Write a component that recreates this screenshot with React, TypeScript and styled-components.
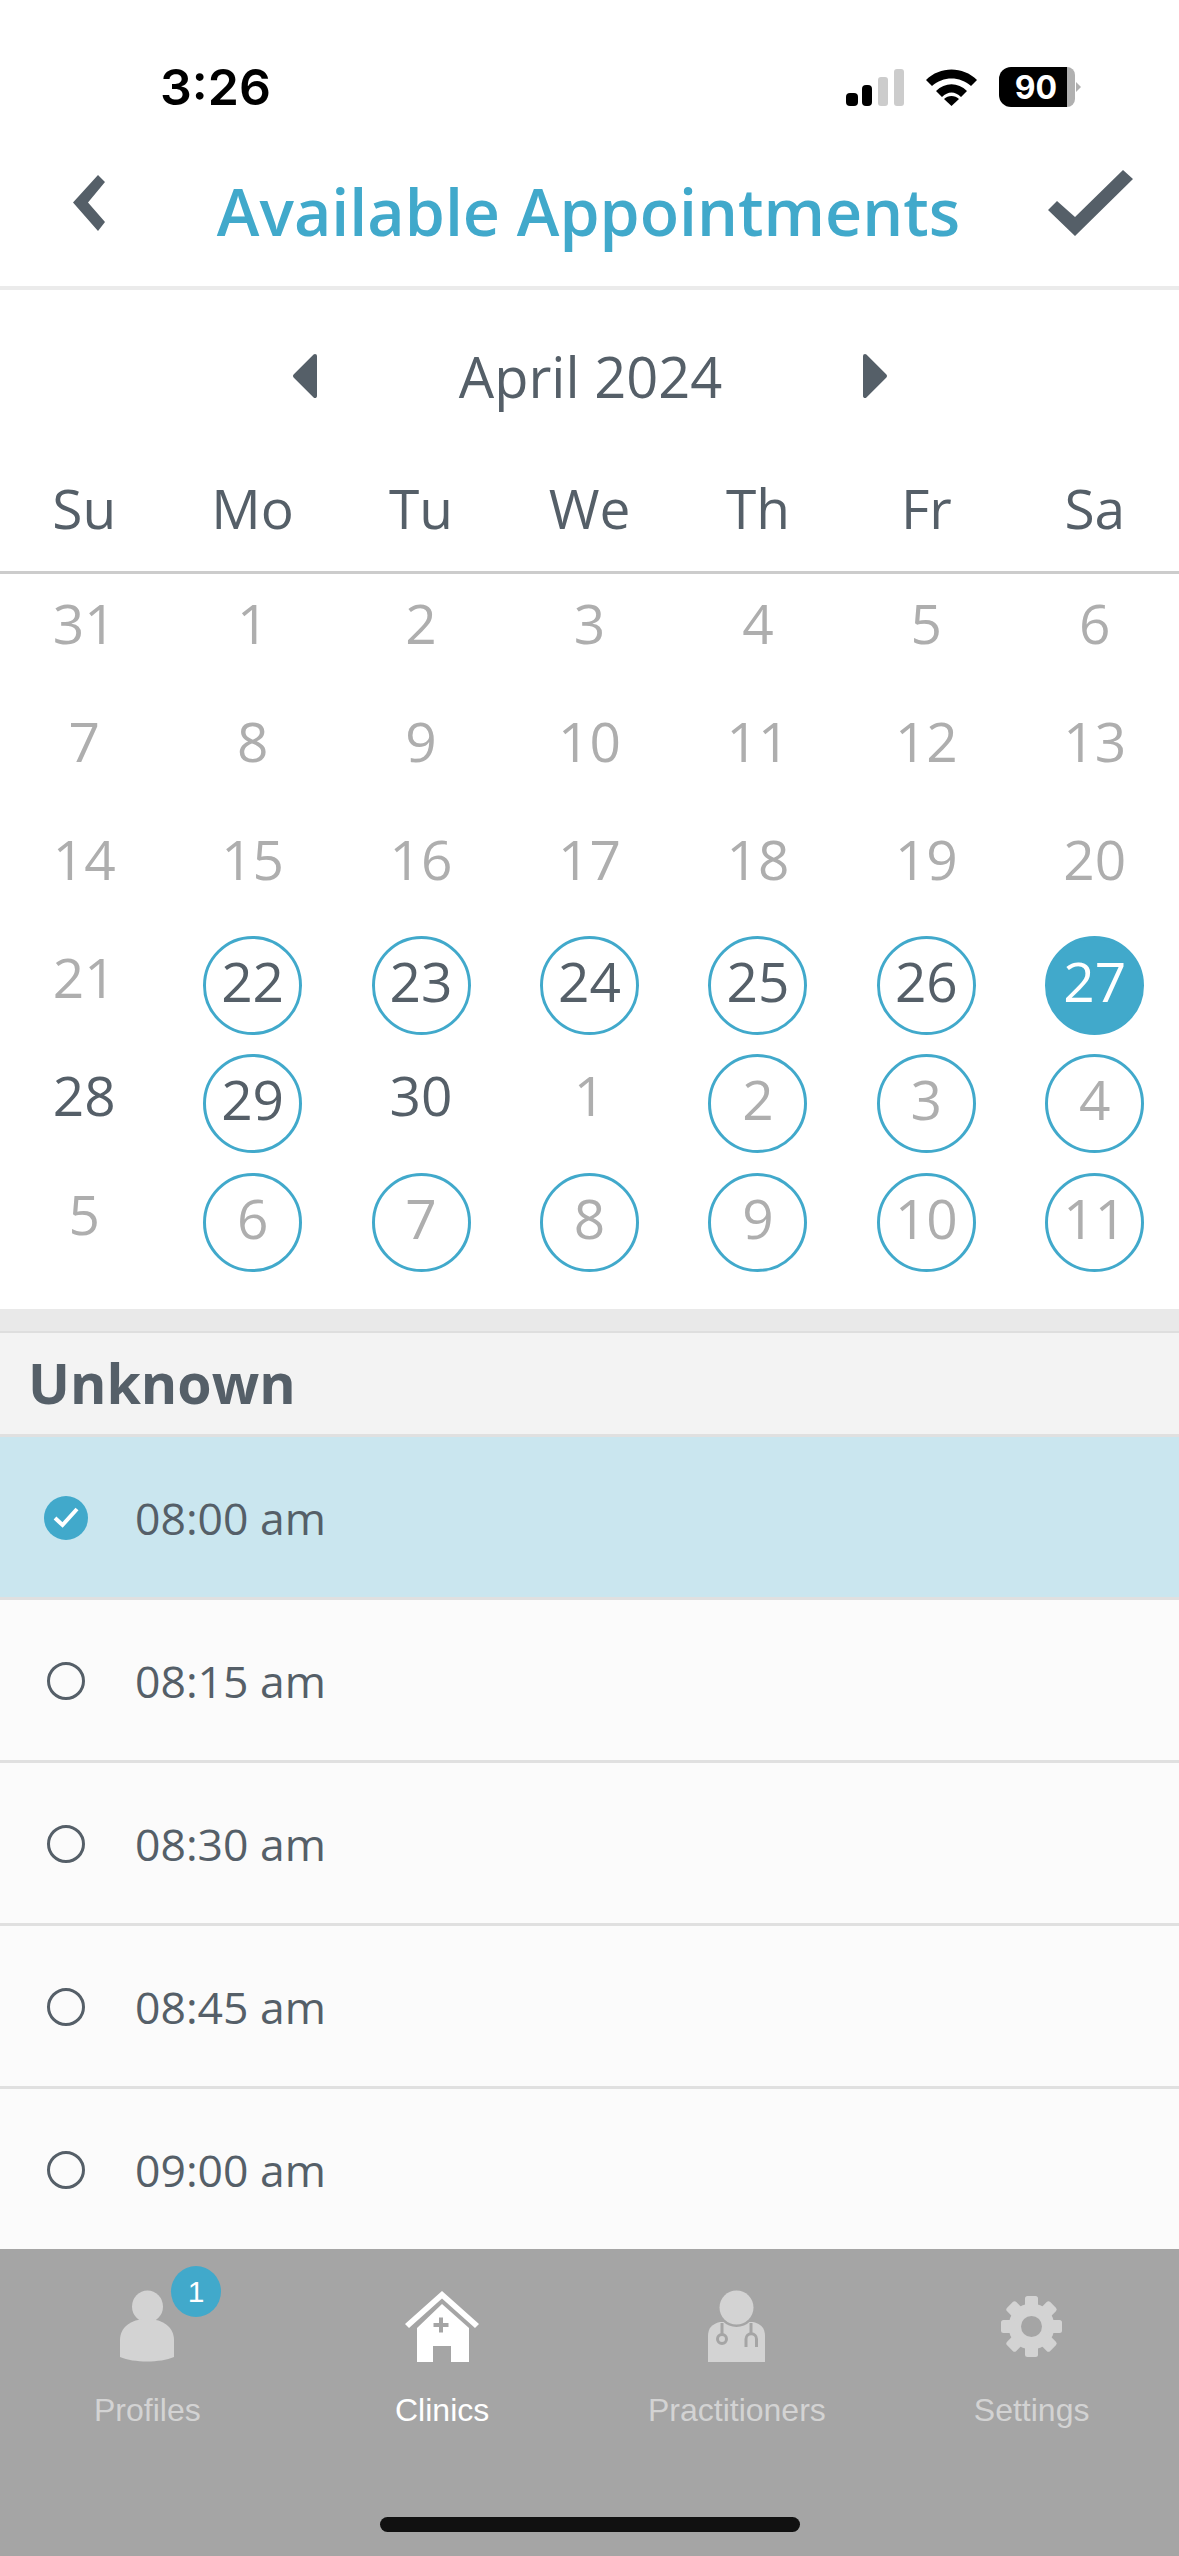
import React from "react";
import styled, { createGlobalStyle } from "styled-components";

const INK = "#555f68";
const TEAL = "#41a9cb";
const MUTED = "#aeaeae";

type DayKind = "plain" | "open" | "picked";
type Day = { label: string; muted?: boolean; kind?: DayKind };

const WEEKDAYS = ["Su", "Mo", "Tu", "We", "Th", "Fr", "Sa"];

const muted = (labels: number[], kind: DayKind = "plain"): Day[] =>
  labels.map((n) => ({ label: String(n), muted: true, kind }));

const DAYS: Day[] = [
  ...muted([31, 1, 2, 3, 4, 5, 6, 7, 8, 9, 10, 11, 12, 13, 14, 15, 16, 17, 18, 19, 20, 21]),
  { label: "22", kind: "open" },
  { label: "23", kind: "open" },
  { label: "24", kind: "open" },
  { label: "25", kind: "open" },
  { label: "26", kind: "open" },
  { label: "27", kind: "picked" },
  { label: "28" },
  { label: "29", kind: "open" },
  { label: "30" },
  ...muted([1]),
  ...muted([2, 3, 4], "open"),
  ...muted([5]),
  ...muted([6, 7, 8, 9, 10, 11], "open"),
];

const TIMES = ["08:00 am", "08:15 am", "08:30 am", "08:45 am", "09:00 am"];

const GlobalStyle = createGlobalStyle`
  html, body {
    margin: 0;
    padding: 0;
    background: #fff;
  }
  * {
    box-sizing: border-box;
  }
`;

const Screen = styled.div`
  width: 1179px;
  height: 2556px;
  display: flex;
  flex-direction: column;
  overflow: hidden;
  background: #fff;
  font-family: "Open Sans", sans-serif;
  color: ${INK};
`;

const StatusBar = styled.div`
  height: 130px;
  flex: none;
  display: flex;
  justify-content: space-between;
  align-items: flex-start;
  padding: 67px 112px 0 160px;
`;

const Clock = styled.span`
  font-family: Inter, sans-serif;
  font-weight: 600;
  font-size: 50px;
  line-height: 40px;
  color: #000;
`;

const StatusIcons = styled.div`
  display: flex;
  align-items: center;
  gap: 22px;
`;

const BatteryBox = styled.div`
  width: 68px;
  height: 40px;
  border-radius: 12px 0 0 12px;
  background: #000;
  display: flex;
  align-items: center;
  justify-content: center;
  padding-left: 6px;
  color: #fff;
  font-family: Inter, sans-serif;
  font-weight: 700;
  font-size: 32px;
  position: relative;
  &::after {
    content: "";
    position: absolute;
    right: -8px;
    top: 0;
    width: 8px;
    height: 40px;
    border-radius: 0 8px 8px 0;
    background: #b0b0b0;
  }
  &::before {
    content: "";
    position: absolute;
    right: -14px;
    top: 15px;
    border-left: 5px solid #b0b0b0;
    border-top: 5px solid transparent;
    border-bottom: 5px solid transparent;
  }
`;

const Header = styled.header`
  height: 160px;
  flex: none;
  display: flex;
  align-items: center;
  justify-content: space-between;
  padding: 0 46px 11px 73px;
  border-bottom: 4px solid #ebebeb;
`;

const Title = styled.h1`
  margin: 16px 0 0 24px;
  font-weight: 600;
  font-size: 64.5px;
  line-height: 84px;
  color: ${TEAL};
`;

const MonthRow = styled.div`
  height: 172px;
  flex: none;
  display: flex;
  justify-content: center;
  align-items: center;
  font-size: 56px;
`;

const MonthLabel = styled.span`
  width: 544px;
  padding-left: 2px;
  text-align: center;
`;

const WeekRow = styled.div`
  height: 112px;
  flex: none;
  display: grid;
  grid-template-columns: repeat(7, 1fr);
  align-items: center;
  border-bottom: 3px solid #cccccc;
  padding-bottom: 19px;
`;

const WeekDay = styled.span`
  text-align: center;
  font-size: 55px;
`;

const MonthGrid = styled.div`
  flex: none;
  display: grid;
  grid-template-columns: repeat(7, 1fr);
  grid-auto-rows: 118.2px;
  padding-bottom: 26px;
`;

const DayCell = styled.div`
  display: flex;
  align-items: center;
  justify-content: center;
  padding-bottom: 4px;
`;

const DayMark = styled.div<{ $kind: DayKind; $muted: boolean }>`
  width: 99px;
  height: 99px;
  flex: none;
  border-radius: 50%;
  display: flex;
  align-items: center;
  justify-content: center;
  font-size: 55px;
  line-height: 1;
  padding-bottom: ${(p) => (p.$kind === "plain" ? "18px" : "10px")};
  border: 3px solid ${(p) => (p.$kind === "plain" ? "transparent" : TEAL)};
  background: ${(p) => (p.$kind === "picked" ? TEAL : "transparent")};
  color: ${(p) => (p.$kind === "picked" ? "#fff" : p.$muted ? MUTED : INK)};
`;

const Band = styled.div`
  height: 24px;
  flex: none;
  background: #e9e9e9;
  border-bottom: 2px solid #dedede;
`;

const SlotHeading = styled.div`
  height: 104px;
  flex: none;
  display: flex;
  align-items: center;
  padding: 0 0 2px 28px;
  background: #f3f3f3;
  border-bottom: 3px solid #e0e0e0;
  font-weight: 700;
  font-size: 55.5px;
`;

const SlotList = styled.div`
  flex: 1;
  min-height: 0;
  overflow: hidden;
`;

const SlotRow = styled.div<{ $selected: boolean }>`
  height: 163px;
  display: flex;
  align-items: center;
  gap: 47px;
  padding-left: 44px;
  background: ${(p) => (p.$selected ? "#cae6ef" : "#fbfbfb")};
  border-bottom: 3px solid #e0e0e0;
  font-size: 44.5px;
`;

const SlotMark = styled.div`
  width: 44px;
  height: 44px;
  flex: none;
  margin-top: 2px;
  display: flex;
  align-items: center;
  justify-content: center;
`;

const RadioRing = styled.span`
  width: 38px;
  height: 38px;
  border-radius: 50%;
  border: 3px solid ${INK};
`;

const RadioChecked = styled.span`
  width: 44px;
  height: 44px;
  border-radius: 50%;
  background: ${TEAL};
  display: flex;
  align-items: center;
  justify-content: center;
`;

const TabBar = styled.nav`
  height: 307px;
  flex: none;
  position: relative;
  display: grid;
  grid-template-columns: repeat(4, 1fr);
  align-items: start;
  padding-top: 41px;
  background: #a5a5a5;
`;

const Tab = styled.div<{ $active?: boolean }>`
  position: relative;
  display: flex;
  flex-direction: column;
  align-items: center;
  color: ${(p) => (p.$active ? "#fff" : "#d3d3d3")};
  font-family: "Liberation Sans", Arial, sans-serif;
  font-size: 32px;
  line-height: 40px;
`;

const TabIcon = styled.div`
  height: 72px;
  margin-bottom: 28px;
  display: flex;
  align-items: center;
  justify-content: center;
`;

const Badge = styled.span`
  position: absolute;
  left: 171px;
  top: -24px;
  width: 50px;
  height: 51px;
  border-radius: 50%;
  background: ${TEAL};
  color: #fff;
  font-size: 30px;
  display: flex;
  align-items: center;
  justify-content: center;
`;

const HomeIndicator = styled.div`
  position: absolute;
  left: 380px;
  top: 268px;
  width: 420px;
  height: 15px;
  border-radius: 8px;
  background: #111;
`;

const SignalIcon = () => (
  <svg width="58" height="37" viewBox="0 0 58 37">
    <rect x="0" y="24" width="12" height="13" rx="4" fill="#000" />
    <rect x="16" y="16" width="10" height="21" rx="4" fill="#000" />
    <rect x="32" y="8" width="10" height="29" rx="3" fill="#ccc" />
    <rect x="48" y="0" width="10" height="37" rx="3" fill="#ccc" />
  </svg>
);

const WifiIcon = () => (
  <svg width="51" height="37" viewBox="0 0 51 37" fill="#000">
    <path d="M0 11C14 -3 37 -3 51 11L45 17C34 7 17 7 6 17Z" />
    <path d="M10 22C19 13 32 13 41 22L35 28C29 22 22 22 16 28Z" />
    <path d="M18 30C22 26 29 26 33 30L25.5 37Z" />
  </svg>
);

const BackIcon = () => (
  <svg width="32" height="56" viewBox="0 0 32 56" fill={INK}>
    <path d="M25 0L32 7L15 27.5L32 47L25 56L0 27.5Z" />
  </svg>
);

const DoneIcon = () => (
  <svg width="85" height="66" viewBox="0 0 85 66" fill={INK}>
    <path d="M75 0L85 9L27 66L0 40L9 31L27 47Z" />
  </svg>
);

const ArrowIcon = ({ right }: { right?: boolean }) => (
  <svg width="26" height="46" viewBox="0 0 26 46" fill={INK}>
    <path
      d={right ? "M3 3L23 23L3 43Z" : "M23 3L3 23L23 43Z"}
      stroke={INK}
      strokeWidth="4"
      strokeLinejoin="round"
    />
  </svg>
);

const TickIcon = () => (
  <svg width="26" height="22" viewBox="0 0 26 22" fill="none">
    <path d="M2 11L9.5 18L24 2" stroke="#fff" strokeWidth="4" />
  </svg>
);

const PersonIcon = () => (
  <svg width="54" height="72" viewBox="0 0 54 72" fill="#d3d3d3">
    <ellipse cx="27.5" cy="16.5" rx="15.5" ry="16" />
    <path d="M0 67C14 73 40 73 54 67V50C54 38 44 29 27 29C10 29 0 38 0 50Z" />
  </svg>
);

const ClinicIcon = () => (
  <svg width="74" height="71" viewBox="0 0 74 71" fill="#fff">
    <path d="M37 0L74 33L70 37L37 7.500L4 37L0 33Z" />
    <path
      fillRule="evenodd"
      d="M37 13L64 37V71H46V55H28V71H12V37ZM34 26.500V32H28.500V36H34V41.500H38V36H43.500V32H38V26.500Z"
    />
  </svg>
);

const DoctorIcon = () => (
  <svg width="57" height="72" viewBox="0 0 57 72" fill="#d3d3d3">
    <path d="M0 72V46C0 38 4 34 12 32H45C53 34 57 38 57 46V72Z" />
    <circle cx="28.500" cy="17.500" r="19.500" fill="#a5a5a5" />
    <circle cx="28.500" cy="17.500" r="17" />
    <g fill="none" stroke="#a5a5a5" strokeWidth="3">
      <path d="M14 33V44" />
      <circle cx="14" cy="49" r="4.500" />
      <path d="M43 33V44" />
      <path d="M38 57V49A5.250 5.250 0 0 1 48.500 49V57" />
    </g>
  </svg>
);

const GearIcon = () => (
  <svg width="61" height="61" viewBox="-30.5 -30.5 61 61" fill="#d3d3d3">
    <circle r="23" />
    {[0, 45, 90, 135, 180, 225, 270, 315].map((angle) => (
      <rect
        key={angle}
        x="-6.500"
        y="-30.500"
        width="13"
        height="14"
        rx="2.500"
        transform={`rotate(${angle})`}
      />
    ))}
    <circle r="10.500" fill="#a5a5a5" />
  </svg>
);

export default function App() {
  return (
    <Screen>
      <GlobalStyle />
      <StatusBar>
        <Clock>3:26</Clock>
        <StatusIcons>
          <SignalIcon />
          <WifiIcon />
          <BatteryBox>90</BatteryBox>
        </StatusIcons>
      </StatusBar>

      <Header>
        <BackIcon />
        <Title>Available Appointments</Title>
        <DoneIcon />
      </Header>

      <MonthRow>
        <ArrowIcon />
        <MonthLabel>April 2024</MonthLabel>
        <ArrowIcon right />
      </MonthRow>

      <WeekRow>
        {WEEKDAYS.map((d) => (
          <WeekDay key={d}>{d}</WeekDay>
        ))}
      </WeekRow>

      <MonthGrid>
        {DAYS.map((d, i) => (
          <DayCell key={i}>
            <DayMark $kind={d.kind ?? "plain"} $muted={!!d.muted}>
              {d.label}
            </DayMark>
          </DayCell>
        ))}
      </MonthGrid>

      <Band />
      <SlotHeading>Unknown</SlotHeading>

      <SlotList>
        {TIMES.map((t, i) => (
          <SlotRow key={t} $selected={i === 0}>
            <SlotMark>
              {i === 0 ? (
                <RadioChecked>
                  <TickIcon />
                </RadioChecked>
              ) : (
                <RadioRing />
              )}
            </SlotMark>
            {t}
          </SlotRow>
        ))}
      </SlotList>

      <TabBar>
        <Tab>
          <TabIcon>
            <PersonIcon />
          </TabIcon>
          Profiles
          <Badge>1</Badge>
        </Tab>
        <Tab $active>
          <TabIcon>
            <ClinicIcon />
          </TabIcon>
          Clinics
        </Tab>
        <Tab>
          <TabIcon>
            <DoctorIcon />
          </TabIcon>
          Practitioners
        </Tab>
        <Tab>
          <TabIcon>
            <GearIcon />
          </TabIcon>
          Settings
        </Tab>
        <HomeIndicator />
      </TabBar>
    </Screen>
  );
}
